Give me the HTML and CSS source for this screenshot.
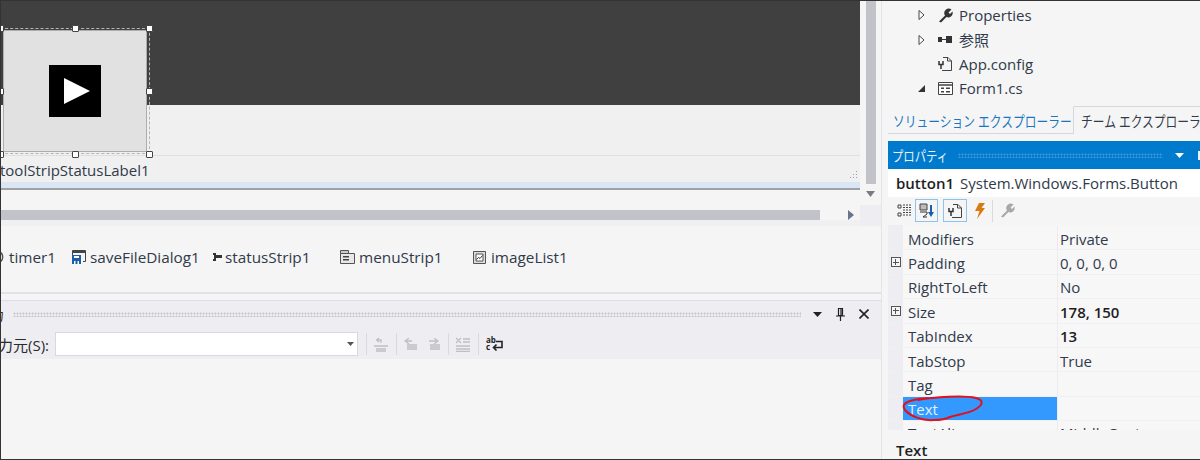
FILE: index.html
```html
<!DOCTYPE html>
<html lang="ja">
<head>
<meta charset="utf-8">
<title>Visual Studio</title>
<link rel="stylesheet" href="styles.css">
</head>
<body>
<div class="page">
  <main class="left">
    <section class="designer">
      <div class="canvas">
        <div class="dark"></div>
        <div class="formarea"></div>
        <div class="status"><span class="status-text">toolStripStatusLabel1</span>
          <svg class="grip" width="10" height="10" viewBox="0 0 10 10"><path d="M8 1h1v1H8zM8 4h1v1H8zM5 4h1v1H5zM8 7h1v1H8zM5 7h1v1H5zM2 7h1v1H2z" fill="#a0a0a0"/></svg>
        </div>
        <div class="blueline"></div>
        <div class="sel-outline"></div>
        <button class="playbtn" type="button"><span class="playbox"><svg width="26" height="26" viewBox="0 0 26 26"><path d="M0 0L26 13L0 26Z" fill="#fff"/></svg></span></button>
        <i class="h h1"></i><i class="h h2"></i><i class="h h3"></i><i class="h h4"></i><i class="h h5"></i><i class="h h6"></i><i class="h h7"></i><i class="h h8"></i>
      </div>
      <div class="vscroll"><div class="vthumb"></div><svg class="varrow" width="9" height="6" viewBox="0 0 9 6"><path d="M0 0h9L4.500 6z" fill="#7a7a85"/></svg></div>
    </section>
    <div class="hscrollrow">
      <div class="htrack"><div class="hthumb"></div><svg class="harrow" width="6" height="10" viewBox="0 0 6 10"><path d="M0 0l6 5-6 5z" fill="#66758c"/></svg></div>
      <div class="corner"></div>
    </div>
    <section class="tray">
      <span class="comp c1"><svg width="8" height="14" viewBox="0 0 8 14"><path d="M0 2a6 6 0 0 1 0 10" fill="none" stroke="#555" stroke-width="1.500"/></svg><span>timer1</span></span>
      <span class="comp c2"><svg width="16" height="16" viewBox="0 0 16 16"><path d="M1.500 6V1.500h13v11H12" fill="none" stroke="#444"/><path d="M1 3h14" stroke="#444" stroke-width="2"/><path d="M1 6h9v9H1z" fill="#1a5fa8"/><path d="M3 7h5v2H3zM3 12h1.500v3H3zM6.500 12H8v3H6.500z" fill="#fff"/></svg><span>saveFileDialog1</span></span>
      <span class="comp c3"><svg width="9" height="8" viewBox="0 0 9 8"><path d="M0 0h3v2h6v3H3v3H0V6h1V2H0z" fill="#333"/></svg><span>statusStrip1</span></span>
      <span class="comp c4"><svg width="15" height="14" viewBox="0 0 15 14"><path d="M.500 3.500h14v10H.500z" fill="#e8e8e8" stroke="#555"/><path d="M.500.500h8v3h-8z" fill="#ccc" stroke="#555"/><path d="M3 6h6v1.500H3zM3 9h6v1.500H3z" fill="#444"/></svg><span>menuStrip1</span></span>
      <span class="comp c5"><svg width="13" height="13" viewBox="0 0 13 13"><path d="M.500.500h12v12H.500z" fill="#ddd" stroke="#555"/><path d="M3 3h7v7H3z" fill="#fff" stroke="#555"/><path d="M3.500 8.500l2-2 1.500 1 2.500-3" fill="none" stroke="#333"/></svg><span>imageList1</span></span>
    </section>
    <section class="output">
      <header class="out-head">
        <span class="out-title">力</span>
        <span class="dots"></span>
        <svg width="9" height="5" viewBox="0 0 9 5"><path d="M0 0h9L4.500 5z" fill="#222"/></svg>
        <svg width="9" height="13" viewBox="0 0 9 13"><path d="M2.500.500h4v7h-4zM0 8h9M4.500 8v5M5 1v6" fill="none" stroke="#222" stroke-width="1.200"/></svg>
        <svg width="10" height="10" viewBox="0 0 10 10"><path d="M.500.500l9 9M9.500.500l-9 9" stroke="#222" stroke-width="1.600"/></svg>
      </header>
      <div class="out-tools">
        <label class="out-label">力元(S):</label>
        <div class="combo"><svg width="7" height="4" viewBox="0 0 7 4"><path d="M0 0h7L3.500 4z" fill="#555"/></svg></div>
        <i class="vsep"></i>
        <svg class="ti t1" width="14" height="15" viewBox="0 0 14 15"><path d="M0 9h14M2 12h10M2 14h10M5 1L2.500 3 5 5M3 3h4v3" fill="none" stroke="#c0c0c4" stroke-width="1.300"/></svg>
        <i class="vsep"></i>
        <svg class="ti" width="13" height="12" viewBox="0 0 13 12"><path d="M5 0L1 3l4 3M1 3h7M3 7h10M3 9h10M3 11h10" fill="none" stroke="#c0c0c4" stroke-width="1.300"/></svg>
        <svg class="ti" width="13" height="12" viewBox="0 0 13 12"><path d="M7 0l4 3-4 3M11 3H2M3 7h10M3 9h10M3 11h10" fill="none" stroke="#c0c0c4" stroke-width="1.300"/></svg>
        <i class="vsep"></i>
        <svg class="ti" width="14" height="15" viewBox="0 0 14 15"><path d="M0 1l5 5M5 1L0 6M7 2h7M7 5h7M0 9h14M0 12h14M0 14.500h14" fill="none" stroke="#c0c0c4" stroke-width="1.300"/></svg>
        <i class="vsep"></i>
        <span class="wrapicon"><span class="abc">ab<br>c</span><svg width="12" height="11" viewBox="0 0 12 11"><path d="M5 1.500h6v6H3M5.500 4.500L2.500 7.500l3 3" fill="none" stroke="#222" stroke-width="1.600"/></svg></span>
      </div>
      <div class="out-body"></div>
    </section>
  </main>
  <aside class="right">
    <div class="tree">
      <div class="node"><svg class="tw" width="6" height="10" viewBox="0 0 6 10"><path d="M.500.500l5 4.500-5 4.500z" fill="#fff" stroke="#444"/></svg><svg class="ic" width="15" height="15" viewBox="0 0 15 15"><path d="M1 13.500L7 7.500A4.500 4.500 0 0 1 13.500 1.500L10.500 4.500 12 6 14.500 3.500A4.500 4.500 0 0 1 8.500 9L3 14.500z" fill="#333"/></svg><span>Properties</span></div>
      <div class="node"><svg class="tw" width="6" height="10" viewBox="0 0 6 10"><path d="M.500.500l5 4.500-5 4.500z" fill="#fff" stroke="#444"/></svg><svg class="ic" width="15" height="15" viewBox="0 0 15 15"><path d="M0 5h4v5H0zM8 4h6v7H8z" fill="#333"/><path d="M4 7.500h4" stroke="#333"/></svg><span>参照</span></div>
      <div class="node"><i class="tw-blank"></i><svg class="ic" width="15" height="16" viewBox="0 0 15 16"><path d="M5 1.500h5l3.500 3.500v9.500H4" fill="none" stroke="#444"/><path d="M9.500 1.500V5h4" fill="none" stroke="#444"/><path d="M1 5v3.500h4V5M3 8.500V13" fill="none" stroke="#333" stroke-width="1.500"/></svg><span>App.config</span></div>
      <div class="node"><svg class="tw" width="7" height="7" viewBox="0 0 7 7"><path d="M7 0v7H0z" fill="#333"/></svg><svg class="ic" width="15" height="13" viewBox="0 0 15 13"><path d="M.500.500h14v12H.500z" fill="#fff" stroke="#444"/><path d="M.500 3h14" stroke="#444" stroke-width="1.500"/><path d="M3 5.500h3v1.500H3zM8 5.500h4v1.500H8zM3 9h3v1.500H3zM8 9h4v1.500H8z" fill="#444"/></svg><span>Form1.cs</span></div>
    </div>
    <nav class="tabs">
      <span class="tab on"><span class="narrow">ソリューション エクスプローラー</span></span>
      <span class="tab off"><span class="narrow">チーム エクスプローラー</span></span>
    </nav>
    <section class="props">
      <header class="p-head"><span class="p-title"><span class="narrow">プロパティ</span></span><i class="p-dots"></i><svg width="9" height="5" viewBox="0 0 9 5"><path d="M0 0h9L4.500 5z" fill="#fff"/></svg><i class="p-pin"></i></header>
      <div class="p-obj"><b>button1</b><span>System.Windows.Forms.Button</span></div>
      <div class="p-tools">
        <span class="pt pt1"><svg width="15" height="15" viewBox="0 0 15 15"><path d="M1 2h3v3H1zM1 10h3v3H1z" fill="none" stroke="#444"/><path d="M6 2h8M6 4.500h8M6 7h8M6 9.500h8M6 12h8" stroke="#444" stroke-dasharray="2 1"/></svg></span>
        <span class="pt act pt2"><svg width="16" height="16" viewBox="0 0 16 16"><path d="M1 1h7v6H1z" fill="#bbb" stroke="#444"/><path d="M1 9h7v2l-4 3h4" fill="none" stroke="#333"/><path d="M12 2v10" stroke="#1a5fa8" stroke-width="2"/><path d="M9 9h6l-3 5z" fill="#1a5fa8"/></svg></span>
        <span class="pt act pt3"><svg width="15" height="16" viewBox="0 0 15 16"><path d="M5 1.500h5l3.500 3.500v9.500H4" fill="none" stroke="#444"/><path d="M9.500 1.500V5h4" fill="none" stroke="#444"/><path d="M1 5v3.500h4V5M3 8.500V13" fill="none" stroke="#333" stroke-width="1.500"/></svg></span>
        <span class="pt pt4"><svg width="11" height="16" viewBox="0 0 11 16"><path d="M5 0h6L7.500 5H11L3 16l2.500-8H1z" fill="#d97a10"/></svg></span>
        <i class="pt-sep"></i>
        <span class="pt"><svg width="15" height="15" viewBox="0 0 15 15"><path d="M1 13.500L7 7.500A4.500 4.500 0 0 1 13.500 1.500L10.500 4.500 12 6 14.500 3.500A4.500 4.500 0 0 1 8.500 9L3 14.500z" fill="#a8a8a8"/></svg></span>
      </div>
      <div class="grid">
        <div class="row"><i class="gut"></i><span class="n">Modifiers</span><span class="v">Private</span></div>
        <div class="row"><i class="gut"><em class="plus"></em></i><span class="n">Padding</span><span class="v">0, 0, 0, 0</span></div>
        <div class="row"><i class="gut"></i><span class="n">RightToLeft</span><span class="v">No</span></div>
        <div class="row"><i class="gut"><em class="plus"></em></i><span class="n">Size</span><span class="v bold">178, 150</span></div>
        <div class="row"><i class="gut"></i><span class="n">TabIndex</span><span class="v bold">13</span></div>
        <div class="row"><i class="gut"></i><span class="n">TabStop</span><span class="v">True</span></div>
        <div class="row"><i class="gut"></i><span class="n">Tag</span><span class="v"></span></div>
        <div class="row sel"><i class="gut"></i><span class="n">Text</span><span class="v"></span></div>
        <div class="row clipped"><i class="gut"></i><span class="n">TextAlign</span><span class="v">MiddleCenter</span></div>
      </div>
      <div class="desc"><b>Text</b></div>
      <svg class="scribble" width="84" height="28" viewBox="0 0 84 28"><path d="M16 5C32 2 62 0 74 3 82 5 81 10 74 14 66 19 56 19 48 22 42 25 36 25 32 25 20 26 8 21 3 15 0 11 2 8 8 6 14 4 22 3 32 3" fill="none" stroke="#e0101c" stroke-width="2"/></svg>
    </section>
  </aside>
</div>
</body>
</html>
```
FILE: styles.css
```css
* { box-sizing: border-box; }
html, body { margin: 0; padding: 0; }
body { width: 1200px; height: 460px; overflow: hidden; background: #f5f5f5; font-family: "Open Sans", "Noto Sans CJK JP", sans-serif; font-size: 15px; color: #2b2b2b; }
.page { width: 1200px; height: 460px; display: grid; grid-template-columns: 887px 312px; border-top: 1px solid #333; border-left: 1px solid #333; border-bottom: 1px solid #333; overflow: hidden; }
.left { display: flex; flex-direction: column; height: 458px; overflow: hidden; border-right: 1px solid #e4e4ea; margin-right: 6px; }

.designer { display: flex; height: 189px; flex: none; }
.canvas { position: relative; width: 859px; flex: none; display: flex; flex-direction: column; height: 189px; }
.dark { height: 104px; background: #404040; flex: none; }
.formarea { height: 50px; background: #f0f0f0; flex: none; }
.status { height: 27px; background: #f0f0f0; border-top: 1px solid #dfdfdf; display: flex; align-items: center; justify-content: space-between; padding: 2px 2px 0 0; flex: none; }
.status-text { margin-left: -1px; white-space: nowrap; color: #303a4a; }
.grip { align-self: flex-end; margin-bottom: 2px; }
.blueline { height: 8px; background: #dae6f3; border-bottom: 2px solid #a0a0a5; flex: none; }

.playbtn { position: absolute; left: 2px; top: 29px; width: 144px; height: 122px; background: #e1e1e1; border: 1px solid #adadad; padding: 0; display: flex; align-items: center; justify-content: center; }
.playbox { width: 52px; height: 52px; background: #000; display: flex; align-items: center; justify-content: center; }
.playbox svg { margin-left: 4px; }
.sel-outline { position: absolute; left: -1px; top: 27px; width: 150px; height: 126px; border: 1px dashed #b5b5b5; }
.h { position: absolute; width: 7px; height: 7px; background: #fff; border: 1px solid #444; border-radius: 1px; }
.h1 { left: -4px; top: 24px; }
.h2 { left: 71px; top: 24px; }
.h3 { left: 145px; top: 24px; }
.h4 { left: -4px; top: 87px; }
.h5 { left: 145px; top: 87px; }
.h6 { left: -4px; top: 150px; }
.h7 { left: 71px; top: 150px; }
.h8 { left: 145px; top: 150px; }

.vscroll { width: 21px; position: relative; padding-left: 6px; }
.vthumb { width: 10px; height: 183px; background: #c2c3c9; }
.varrow { display: block; position: absolute; top: 190px; left: 6px; }

.hscrollrow { display: flex; height: 36px; flex: none; }
.htrack { width: 859px; padding-top: 20px; position: relative; border-bottom: 6px solid #f0f0f2; }
.hthumb { width: 819px; height: 10px; background: #c2c3c9; }
.harrow { position: absolute; left: 847px; top: 20px; }
.corner { width: 21px; height: 36px; background: linear-gradient(#f5f5f5 0 15px, #eeeef2 15px); }

.tray { height: 68px; flex: none; background: #f5f5f5; border-bottom: 2px solid #e2e3ea; display: flex; align-items: center; padding-bottom: 4px; font-size: 15.300px; }
.comp { display: flex; align-items: center; gap: 3px; white-space: nowrap; flex: none; color: #303a4a; }
.c1 { margin-left: -1px; width: 65px; gap: 1px; }
.c2 { width: 142px; margin-left: 6px; }
.c3 { width: 127px; }
.c4 { width: 133px; gap: 4px; }
.c5 { gap: 5px; }

.output { margin-top: 6px; flex: 1; background: #eeeef2; border-top: 1px solid #d9deea; display: flex; flex-direction: column; }
.out-head { height: 26px; display: flex; align-items: center; gap: 14px; padding-right: 12px; flex: none; }
.out-title { width: 3px; overflow: hidden; direction: rtl; white-space: nowrap; font-size: 13px; }
.dots { flex: 1; height: 5px; margin: 0 -2px 0 -5px; background-image: radial-gradient(#c6c6cc 45%, transparent 50%); background-size: 3px 3px; }
.out-tools { height: 32px; display: flex; align-items: center; padding-top: 2px; flex: none; }
.out-label { white-space: nowrap; margin-left: -3px; width: 57px; flex: none; }
.combo { width: 303px; height: 24px; background: #fff; border: 1px solid #d8d8e0; flex: none; display: flex; align-items: center; justify-content: flex-end; padding-right: 3px; }
.vsep { width: 1px; height: 22px; background: #d9d9de; margin: 0 7px 0 8px; flex: none; }
.ti { flex: none; }
.ti + .ti { margin-left: 10px; }
.wrapicon { display: flex; align-items: center; color: #222; }
.wrapicon svg { margin: 2px 0 0 -5px; }
.abc { font-size: 8px; line-height: 7px; font-weight: 700; margin-top: -3px; }
.out-body { flex: 1; background: #f5f5f5; }

.right { height: 458px; display: flex; flex-direction: column; overflow: hidden; background: #f5f5f5; }
.tree { height: 105px; flex: none; padding: 2px 0 0 30px; overflow: hidden; }
.node { height: 24.400px; display: flex; align-items: center; white-space: nowrap; color: #303a4a; }
.tw { width: 7px; flex: none; margin-right: 13px; }
.tw-blank { width: 7px; margin-right: 13px; flex: none; }
.ic { width: 15px; margin-right: 6px; flex: none; }

.tabs { height: 28px; flex: none; display: flex; white-space: nowrap; font-size: 14.500px; }
.tab { display: flex; align-items: center; height: 28px; overflow: hidden; }
.narrow { display: inline-block; flex: none; transform: scaleX(.81); transform-origin: left center; white-space: nowrap; }
.tab.on { width: 186px; padding-left: 5px; color: #1a76c0; border-right: 1px solid #d5d7df; border-bottom: 1px solid #d5d7df; border-top: 1px solid transparent; }
.tab.off { flex: 1; padding-left: 7px; border-top: 1px solid #d5d7df; color: #303a4a; background: #f5f5f5; }

.props { position: relative; margin-top: 7px; flex: 1; display: flex; flex-direction: column; overflow: hidden; }
.p-head { height: 28px; flex: none; background: #007acc; color: #e8f2fa; display: flex; align-items: center; padding-left: 4px; font-size: 14px; gap: 4px; }
.p-title { width: 62px; flex: none; overflow: hidden; }
.p-dots { width: 205px; height: 5px; flex: none; background-image: radial-gradient(#3d97d6 45%, transparent 50%); background-size: 3px 3px; }
.p-head svg { margin-left: 8px; flex: none; }
.p-pin { width: 2px; height: 9px; background: #e8f2fa; margin-left: 10px; flex: none; }
.p-obj { height: 28px; flex: none; background: #fff; display: flex; align-items: center; gap: 6px; padding-left: 8px; color: #303a4a; white-space: nowrap; }
.p-obj b { font-weight: 600; color: #1e1e1e; }
.p-tools { height: 28px; flex: none; background: #f5f5f5; display: flex; align-items: center; padding: 0 0 1px 6px; }
.pt { width: 23px; height: 23px; display: flex; align-items: center; justify-content: center; flex: none; }
.pt.act { border: 1px solid #8cc4ee; }
.pt1 { width: 21px; }
.pt2 { margin-right: 5px; }
.pt3 { width: 24px; margin-right: 3px; }
.pt4 { width: 18px; }
.pt-sep { width: 1px; height: 22px; background: #d9d9de; margin: 0 3px 0 4px; flex: none; }
.grid { height: 205px; flex: none; overflow: hidden; padding-top: 1px; background: linear-gradient(90deg, #eeeef2 15px, #f7f7f8 15px); }
.row { height: 24.400px; display: flex; align-items: center; border-bottom: 1px solid #f0f0f3; color: #303a4a; white-space: nowrap; }
.gut { width: 15px; flex: none; display: flex; justify-content: center; }
.plus { width: 10px; height: 10px; border: 1px solid #555; background: linear-gradient(#555,#555) center/6px 1px no-repeat, linear-gradient(#555,#555) center/1px 6px no-repeat, #f5f5f5; }
.n { width: 154px; flex: none; padding: 2px 0 0 5px; height: 100%; display: flex; align-items: center; }
.v { flex: 1; padding: 2px 0 0 2px; border-left: 1px solid #ececf0; height: 100%; display: flex; align-items: center; }
.clipped .n, .clipped .v { padding-top: 0; }
.bold { font-weight: 600; color: #1e1e1e; }
.sel .n { background: #3399ff; color: #e4f1ff; }
.desc { flex: 1; background: #f5f5f5; padding: 10px 0 0 8px; }
.desc b { font-weight: 600; color: #1e1e1e; }
.scribble { position: absolute; left: 14px; top: 254px; }
```
